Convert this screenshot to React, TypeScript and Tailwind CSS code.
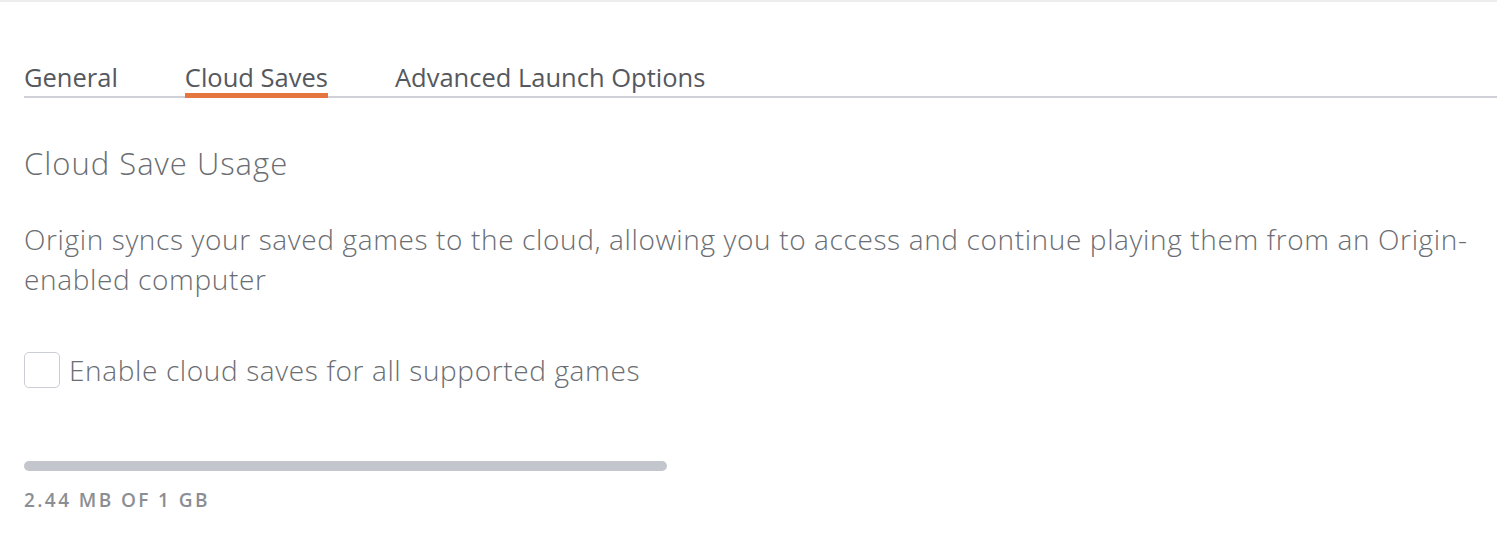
export default function App() {
  return (
    <div className="w-[1497px] h-[551px] bg-white border-t-2 border-[#ededed] overflow-hidden" style={{ fontFamily: '"Open Sans", sans-serif' }}>
      <div className="pl-6">
        {/* Tabs */}
        <div className="mt-[57px] flex border-b-2 border-[#cfd1d6] text-[25.5px] text-[#55585d]">
          <div className="pb-[1px] mr-[67px] leading-[36px]">General</div>
          <div className="relative pb-[1px] mr-[67px] leading-[36px]">
            Cloud Saves
            <div className="absolute left-0 right-0 -bottom-[2px] h-[5px] bg-[#e5763d]" />
          </div>
          <div className="pb-[1px] leading-[36px]">Advanced Launch Options</div>
        </div>

        <h2 className="mt-[45px] text-[31px] font-light tracking-[1px] text-[#6a6d72] leading-[40px]">Cloud Save Usage</h2>

        <p className="mt-[36px] text-[28px] font-light tracking-[0.63px] text-[#6a6d72] leading-[40px]">
          Origin syncs your saved games to the cloud, allowing you to access and continue playing them from an Origin-enabled computer
        </p>

        <label className="mt-[51px] flex items-center gap-[9px]">
          <span className="w-[36px] h-[36px] rounded-[5px] border-[1.5px] border-[#cbced5] bg-white" />
          <span className="text-[28px] font-light tracking-[0.63px] text-[#6a6d72] leading-[40px]">Enable cloud saves for all supported games</span>
        </label>

        <div className="mt-[71px] w-[643px] h-[10px] rounded-full bg-[#c3c6cd]" />
        <div className="mt-[16px] text-[19px] leading-[26px] font-semibold tracking-[2.4px] text-[#8b8e94]">2.44 MB OF 1 GB</div>
      </div>
    </div>
  );
}
